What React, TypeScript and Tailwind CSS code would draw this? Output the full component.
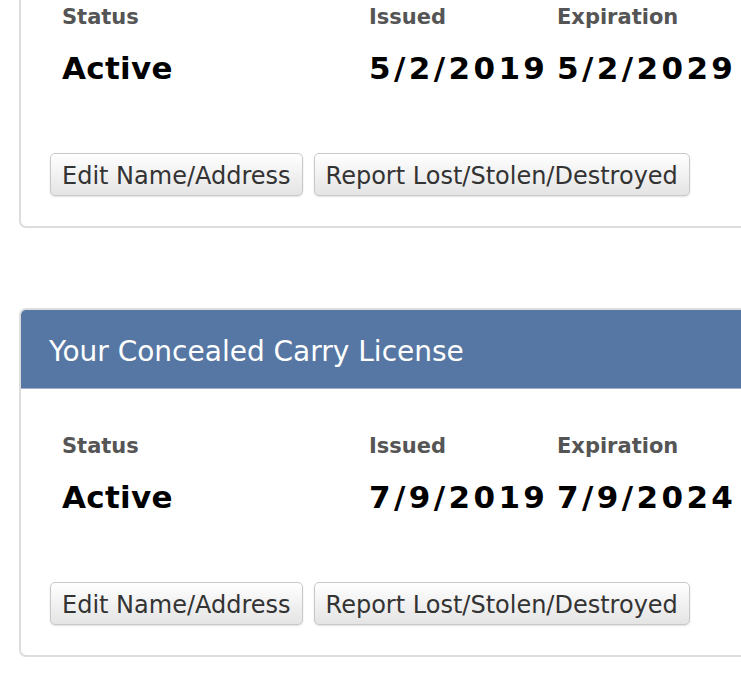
import React from "react";

type Lic = { title: string; issued: string; exp: string };

const licenses: Lic[] = [
  { title: "Your Firearms Owner's ID Card", issued: "5/2/2019", exp: "5/2/2029" },
  { title: "Your Concealed Carry License", issued: "7/9/2019", exp: "7/9/2024" },
];

function Btn({ children }: { children: React.ReactNode }) {
  return (
    <button className="h-[43px] px-[11px] pt-[2px] rounded-[5px] border border-[#c8c8c8] bg-gradient-to-b from-[#ffffff] to-[#e4e4e4] text-[#333] text-[24px] leading-none shadow-[0_1px_2px_rgba(0,0,0,0.12)]">
      {children}
    </button>
  );
}

function Card({ lic }: { lic: Lic }) {
  return (
    <div className="ml-[19px] w-[760px] rounded-[7px] border-2 border-[#dddddd] bg-white overflow-hidden">
      <div className="h-[79px] bg-[#5677a3] border-b border-[#9fb0c8] flex items-center pl-[28px] pt-[6px]">
        <span className="text-white text-[28px] leading-none">{lic.title}</span>
      </div>
      <div className="pl-[41px] pt-[45px] pb-[30px]">
        <div className="grid grid-cols-[307px_188px_1fr] text-[21px] font-bold text-[#555] leading-[24px]">
          <div>Status</div>
          <div>Issued</div>
          <div>Expiration</div>
        </div>
        <div className="grid grid-cols-[307px_188px_1fr] mt-[21px] text-[31px] font-bold text-black leading-[37px]">
          <div className="tracking-[0.01em]">Active</div>
          <div className="whitespace-nowrap tracking-[0.11em]">{lic.issued}</div>
          <div className="whitespace-nowrap tracking-[0.11em]">{lic.exp}</div>
        </div>
        <div className="flex gap-[11px] mt-[66px] -ml-[12px]">
          <Btn>Edit Name/Address</Btn>
          <Btn>Report Lost/Stolen/Destroyed</Btn>
        </div>
      </div>
    </div>
  );
}

export default function App() {
  return (
    <div
      className="w-[741px] h-[682px] overflow-hidden bg-white"
      style={{ fontFamily: '"DejaVu Sans", Verdana, sans-serif' }}
    >
      <div className="mt-[-121px] flex flex-col gap-[80px]">
        {licenses.map((l) => (
          <Card key={l.title} lic={l} />
        ))}
      </div>
    </div>
  );
}
